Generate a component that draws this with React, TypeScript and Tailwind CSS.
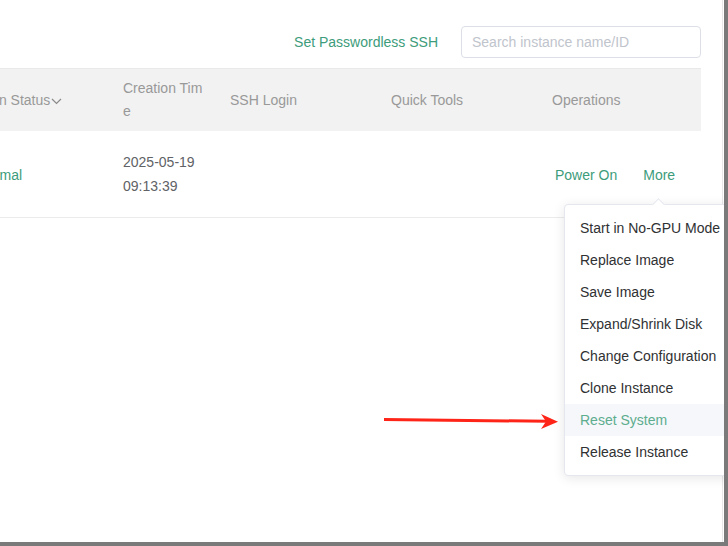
import React from "react";

const items = [
  "Start in No-GPU Mode",
  "Replace Image",
  "Save Image",
  "Expand/Shrink Disk",
  "Change Configuration",
  "Clone Instance",
  "Reset System",
  "Release Instance",
];

export default function App() {
  return (
    <div
      className="w-[728px] h-[546px] bg-[#7a7a7a] overflow-hidden"
      style={{ fontFamily: '"Liberation Sans", Arial, sans-serif' }}
    >
      <div className="relative w-[724px] h-[542px] bg-white overflow-hidden">
        <div className="w-[723px] h-full border-r border-[#e8e8e8] pr-[21px] pt-[26px]">
          {/* toolbar */}
          <div className="flex items-center justify-end h-[32px] gap-[23px]">
            <span className="text-[14px] text-[#3d9c7b] cursor-pointer">Set Passwordless SSH</span>
            <div className="w-[240px] h-[32px] border border-[#dcdfe6] rounded-[4px] flex items-center pl-[10px]">
              <span className="text-[14px] text-[#c0c4cc]">Search instance name/ID</span>
            </div>
          </div>

          {/* table */}
          <div className="mt-[10px] w-[701px] text-[14px]">
            <div className="flex h-[63px] bg-[#f2f2f2] border-t border-[#e9e9e9] text-[#999999] items-center">
              <div className="w-[111px] flex items-center overflow-hidden whitespace-nowrap">
                <span className="ml-[-19px]">Run Status</span>
                <svg width="11" height="7" viewBox="0 0 11 7" className="ml-[1px] mt-[2px]">
                  <polyline points="1,1 5.5,5.5 10,1" fill="none" stroke="#8a8a8a" strokeWidth="1.2" />
                </svg>
              </div>
              <div className="w-[107px] px-[12px] leading-[23px] break-all">Creation Time</div>
              <div className="w-[161px] px-[12px]">SSH Login</div>
              <div className="w-[161px] px-[12px]">Quick Tools</div>
              <div className="flex-1 px-[12px]">Operations</div>
            </div>
            <div className="flex h-[87px] border-b border-[#ebebeb] items-center">
              <div className="w-[111px] overflow-hidden whitespace-nowrap text-[#3d9c7b] pt-[2px]">
                <span className="ml-[-23px]">Normal</span>
              </div>
              <div className="w-[107px] px-[12px] leading-[24px] text-[#606266]">
                <div>2025-05-19</div>
                <div>09:13:39</div>
              </div>
              <div className="w-[161px] px-[12px]"></div>
              <div className="w-[161px] px-[12px]"></div>
              <div className="flex-1 pl-[15px] pt-[3px] flex items-center gap-[26px] text-[#3d9c7b]">
                <span>Power On</span>
                <span>More</span>
              </div>
            </div>
          </div>
        </div>

        {/* dropdown menu */}
        <div className="absolute left-[564px] top-[204px] w-[180px] bg-white border border-[#e4e7ed] rounded-[4px] shadow-[0_2px_12px_rgba(0,0,0,0.1)] py-[7px]">
          <div className="absolute top-[-5px] left-[89px] w-[9px] h-[9px] rotate-45 bg-white border-l border-t border-[#e4e7ed]" />
          {items.map((it) => (
            <div
              key={it}
              className={
                it === "Reset System"
                  ? "h-[32px] flex items-center pl-[15px] text-[14px] whitespace-nowrap bg-[#f5f7fa] text-[#5dad8f]"
                  : "h-[32px] flex items-center pl-[15px] text-[14px] whitespace-nowrap text-[#303133]"
              }
            >
              {it}
            </div>
          ))}
        </div>

        {/* red annotation arrow */}
        <svg className="absolute left-0 top-0 pointer-events-none" width="724" height="542">
          <line x1="384" y1="419.5" x2="548" y2="421.3" stroke="#ff2418" strokeWidth="3" />
          <polygon points="541,414 558,421.8 541,429 546,421.5" fill="#ff2418" />
        </svg>
      </div>
    </div>
  );
}
